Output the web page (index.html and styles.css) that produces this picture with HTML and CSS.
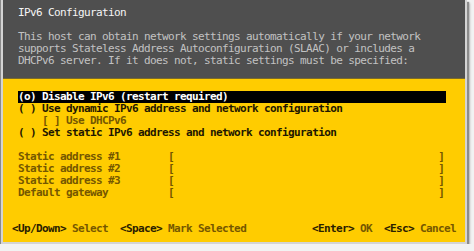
FILE: index.html
```html
<!DOCTYPE html>
<html>
<head>
<meta charset="utf-8">
<link rel="stylesheet" href="styles.css">
</head>
<body>
<div class="window">
  <div class="head">
    <div class="line title">IPv6 Configuration</div>
    <div class="line">&nbsp;</div>
    <div class="line info">This host can obtain network settings automatically if your network</div>
    <div class="line info">supports Stateless Address Autoconfiguration (SLAAC) or includes a</div>
    <div class="line info">DHCPv6 server. If it does not, static settings must be specified:</div>
  </div>
  <div class="body">
    <div class="line selected">(o) Disable IPv6 (restart required)</div>
    <div class="line strong">( ) Use dynamic IPv6 address and network configuration</div>
    <div class="line dim">    [ ] Use DHCPv6</div>
    <div class="line strong">( ) Set static IPv6 address and network configuration</div>
    <div class="line">&nbsp;</div>
    <div class="line dim">Static address #1        [                                            ]</div>
    <div class="line dim">Static address #2        [                                            ]</div>
    <div class="line dim">Static address #3        [                                            ]</div>
    <div class="line dim">Default gateway          [                                            ]</div>
    <div class="line">&nbsp;</div>
    <div class="line">&nbsp;</div>
    <div class="footer">
      <div class="keys"><span class="key">&lt;Up/Down&gt;</span> Select  <span class="key">&lt;Space&gt;</span> Mark Selected</div>
      <div class="keys"><span class="key">&lt;Enter&gt;</span> OK  <span class="key">&lt;Esc&gt;</span> Cancel</div>
    </div>
  </div>
</div>
</body>
</html>
```
FILE: styles.css
```css
html, body {
  margin: 0;
  padding: 0;
  background: #f2f2f2;
}
body {
  padding-left: 1px;
  font-family: "DejaVu Sans Mono", "Liberation Mono", monospace;
  font-size: 11px;
  letter-spacing: -0.62px;
}
.window {
  width: 462px;
  border-left: 2px solid #d4d4d4;
  border-right: 2px solid #d4d4d4;
  border-bottom: 2px solid #d4d4d4;
  box-shadow: -1px 0 0 #8a8a8a, 2px 2px 1px #8c8c8c, 3px 3px 2px #bdbdbd;
}
.line {
  height: 12px;
  line-height: 12px;
  white-space: pre;
}
.head {
  background: #4f4f4f;
  padding: 7px 0 12px 15px;
}
.title {
  color: #f6f6f6;
}
.info {
  color: #c2c2c2;
}
.body {
  background: #ffcc00;
  padding: 12px 0 7px 15px;
  border-top: 1px solid #7a6a2a;
  margin-top: -1px;
}
.selected {
  background: #000;
  color: #fff;
  width: 428px;
  font-weight: bold;
}
.strong {
  color: #1e1700;
  font-weight: bold;
}
.dim {
  color: #755700;
  font-weight: bold;
}
.footer {
  display: flex;
  justify-content: space-between;
  margin-left: -6px;
  padding-right: 9px;
  height: 12px;
  line-height: 12px;
}
.keys {
  white-space: pre;
  color: #755700;
  font-weight: bold;
}
.key {
  color: #2a2000;
}
```
